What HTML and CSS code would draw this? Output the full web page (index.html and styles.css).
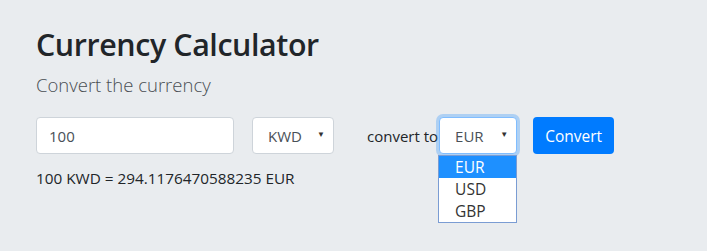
FILE: index.html
```html
<!DOCTYPE html>
<html>
<head>
<meta charset="utf-8">
<link rel="stylesheet" href="styles.css">
</head>
<body>
<div class="jumbotron">
  <h1 class="title">Currency Calculator</h1>
  <p class="lead">Convert the currency</p>
  <div class="form-row">
    <input class="form-control amount" type="text" value="100">
    <div class="select from">
      <span>KWD</span>
      <span class="arrow">&#9660;</span>
    </div>
    <label class="label">convert to</label>
    <div class="select-wrap">
      <div class="select to focused">
        <span>EUR</span>
        <span class="arrow">&#9660;</span>
      </div>
      <ul class="dropdown">
        <li class="active">EUR</li>
        <li>USD</li>
        <li>GBP</li>
      </ul>
    </div>
    <button class="btn">Convert</button>
  </div>
  <p class="result">100 KWD = 294.1176470588235 EUR</p>
</div>
</body>
</html>
```

FILE: styles.css
```css
html, body {
  margin: 0;
  padding: 0;
  background: #e9ecef;
  height: 100%;
}
.jumbotron {
  font-family: "Open Sans", "Noto Sans", sans-serif;
  color: #212529;
  padding: 25px 36px 0 36px;
}
.title {
  margin: 0;
  font-size: 30.4px;
  font-weight: 600;
  line-height: 40px;
  letter-spacing: -0.4px;
}
.lead {
  margin: 7px 0 0 0;
  font-size: 18.5px;
  font-weight: 300;
  line-height: 26px;
  color: #4a4f54;
}
.form-row {
  display: flex;
  align-items: center;
  margin-top: 19px;
  height: 37px;
}
.form-control {
  box-sizing: border-box;
  height: 37px;
  width: 198px;
  border: 1px solid #ced4da;
  border-radius: 4px;
  background: #fff;
  padding: 0 12px;
  font-family: inherit;
  font-size: 15px;
  color: #495057;
  outline: none;
}
.select {
  box-sizing: border-box;
  height: 37px;
  border: 1px solid #ced4da;
  border-radius: 4px;
  background: #fff;
  display: flex;
  align-items: center;
  justify-content: space-between;
  padding: 0 8px 0 15px;
  font-size: 15px;
  color: #495057;
}
.select .arrow {
  font-size: 8px;
  color: #333;
  margin-top: -4px;
}
.from {
  width: 82px;
  margin-left: 18px;
}
.label {
  margin-left: 33px;
  font-size: 15px;
  color: #212529;
}
.select-wrap {
  position: relative;
  margin-left: 1px;
}
.to {
  width: 78px;
}
.focused {
  border-color: #80bdff;
  box-shadow: 0 0 0 3px rgba(0, 123, 255, 0.25);
}
.dropdown {
  position: absolute;
  left: -1px;
  top: 38px;
  width: 79px;
  box-sizing: border-box;
  margin: 0;
  padding: 0;
  list-style: none;
  background: #fff;
  border: 1px solid #7a9cd3;
}
.dropdown li {
  height: 22px;
  line-height: 22px;
  padding-left: 16px;
  font-size: 15.5px;
  color: #333;
}
.dropdown li.active {
  background: #1e90ff;
  color: #fff;
}
.btn {
  margin-left: 16px;
  box-sizing: border-box;
  height: 37px;
  width: 81px;
  border: none;
  border-radius: 4px;
  background: #007bff;
  color: #fff;
  font-family: inherit;
  font-size: 15.5px;
  padding: 0;
}
.result {
  margin: 13px 0 0 0;
  font-size: 15.3px;
  line-height: 22px;
}
```
